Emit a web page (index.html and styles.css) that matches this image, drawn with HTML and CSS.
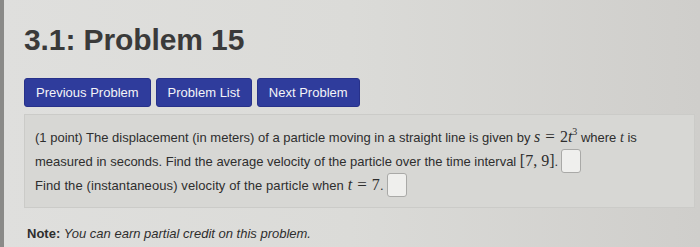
FILE: index.html
```html
<!DOCTYPE html>
<html>
<head>
<meta charset="utf-8">
<link rel="stylesheet" href="styles.css">
</head>
<body>
<div class="page">
  <h1 class="title">3.1: Problem 15</h1>
  <div class="nav">
    <button class="btn">Previous Problem</button>
    <button class="btn">Problem List</button>
    <button class="btn">Next Problem</button>
  </div>
  <div class="problem">
    <p class="line">(1 point) The displacement (in meters) of a particle moving in a straight line is given by <span class="math">s</span><span class="eq">=</span><span class="mr">2</span><span class="math">t</span><sup class="sup">3</sup> where <span class="mi">t</span> is</p>
    <p class="line">measured in seconds. Find the average velocity of the particle over the time interval <span class="mr">[7, 9]</span>.<span class="ans"></span></p>
    <p class="line wide">Find the (instantaneous) velocity of the particle when <span class="math">t</span><span class="eq">=</span><span class="mr">7</span>.<span class="ans"></span></p>
  </div>
  <p class="note"><b>Note:</b> <i>You can earn partial credit on this problem.</i></p>
</div>
</body>
</html>
```
FILE: styles.css
```css
html, body {
  margin: 0;
  padding: 0;
}
body {
  width: 700px;
  height: 247px;
  overflow: hidden;
  background: linear-gradient(90deg, #dfdfdd 0%, #dbdbd8 50%, #cfcecb 100%);
  font-family: "Liberation Sans", Arial, sans-serif;
  color: #2e2e2e;
  border-left: 4px solid #8a8a88;
  box-sizing: border-box;
}
.page {
  padding: 0 5px 0 20px;
}
.title {
  margin: 0;
  padding-top: 22px;
  font-size: 30px;
  font-weight: bold;
  color: #3a3a3a;
  line-height: 36px;
  letter-spacing: -0.1px;
}
.nav {
  display: flex;
  gap: 5px;
  margin-top: 20px;
}
.btn {
  background: #2f3c9c;
  color: #f4f4f8;
  border: 1px solid #27318a;
  border-radius: 3px;
  font-family: "Liberation Sans", Arial, sans-serif;
  font-size: 13px;
  height: 29px;
  padding: 0 11px;
}
.problem {
  margin-top: 7px;
  background: #d7d7d4;
  border: 1px solid #cbcbc8;
  padding: 10px 0 10px 10px;
  height: 72px;
}
.line {
  margin: 0;
  font-size: 13px;
  line-height: 23px;
  height: 24px;
  white-space: nowrap;
}
.wide {
  letter-spacing: 0.1px;
}
.math {
  font-family: "Liberation Serif", serif;
  font-style: italic;
  font-size: 16px;
}
.mi {
  font-family: "Liberation Serif", serif;
  font-style: italic;
  font-size: 14px;
}
.mr {
  font-family: "Liberation Serif", serif;
  font-size: 16px;
}
.eq {
  font-family: "Liberation Serif", serif;
  font-size: 17px;
  padding: 0 5px;
}
.sup {
  font-family: "Liberation Serif", serif;
  font-size: 10px;
  vertical-align: 7px;
  line-height: 0;
}
.ans {
  display: inline-block;
  width: 18px;
  height: 22px;
  border: 1px solid #a9a9a7;
  border-radius: 3px;
  background: #efefed;
  vertical-align: -7px;
  margin-left: 3px;
}
.note {
  margin: 18px 0 0 3px;
  font-size: 13px;
  color: #2e2e2e;
}
```
